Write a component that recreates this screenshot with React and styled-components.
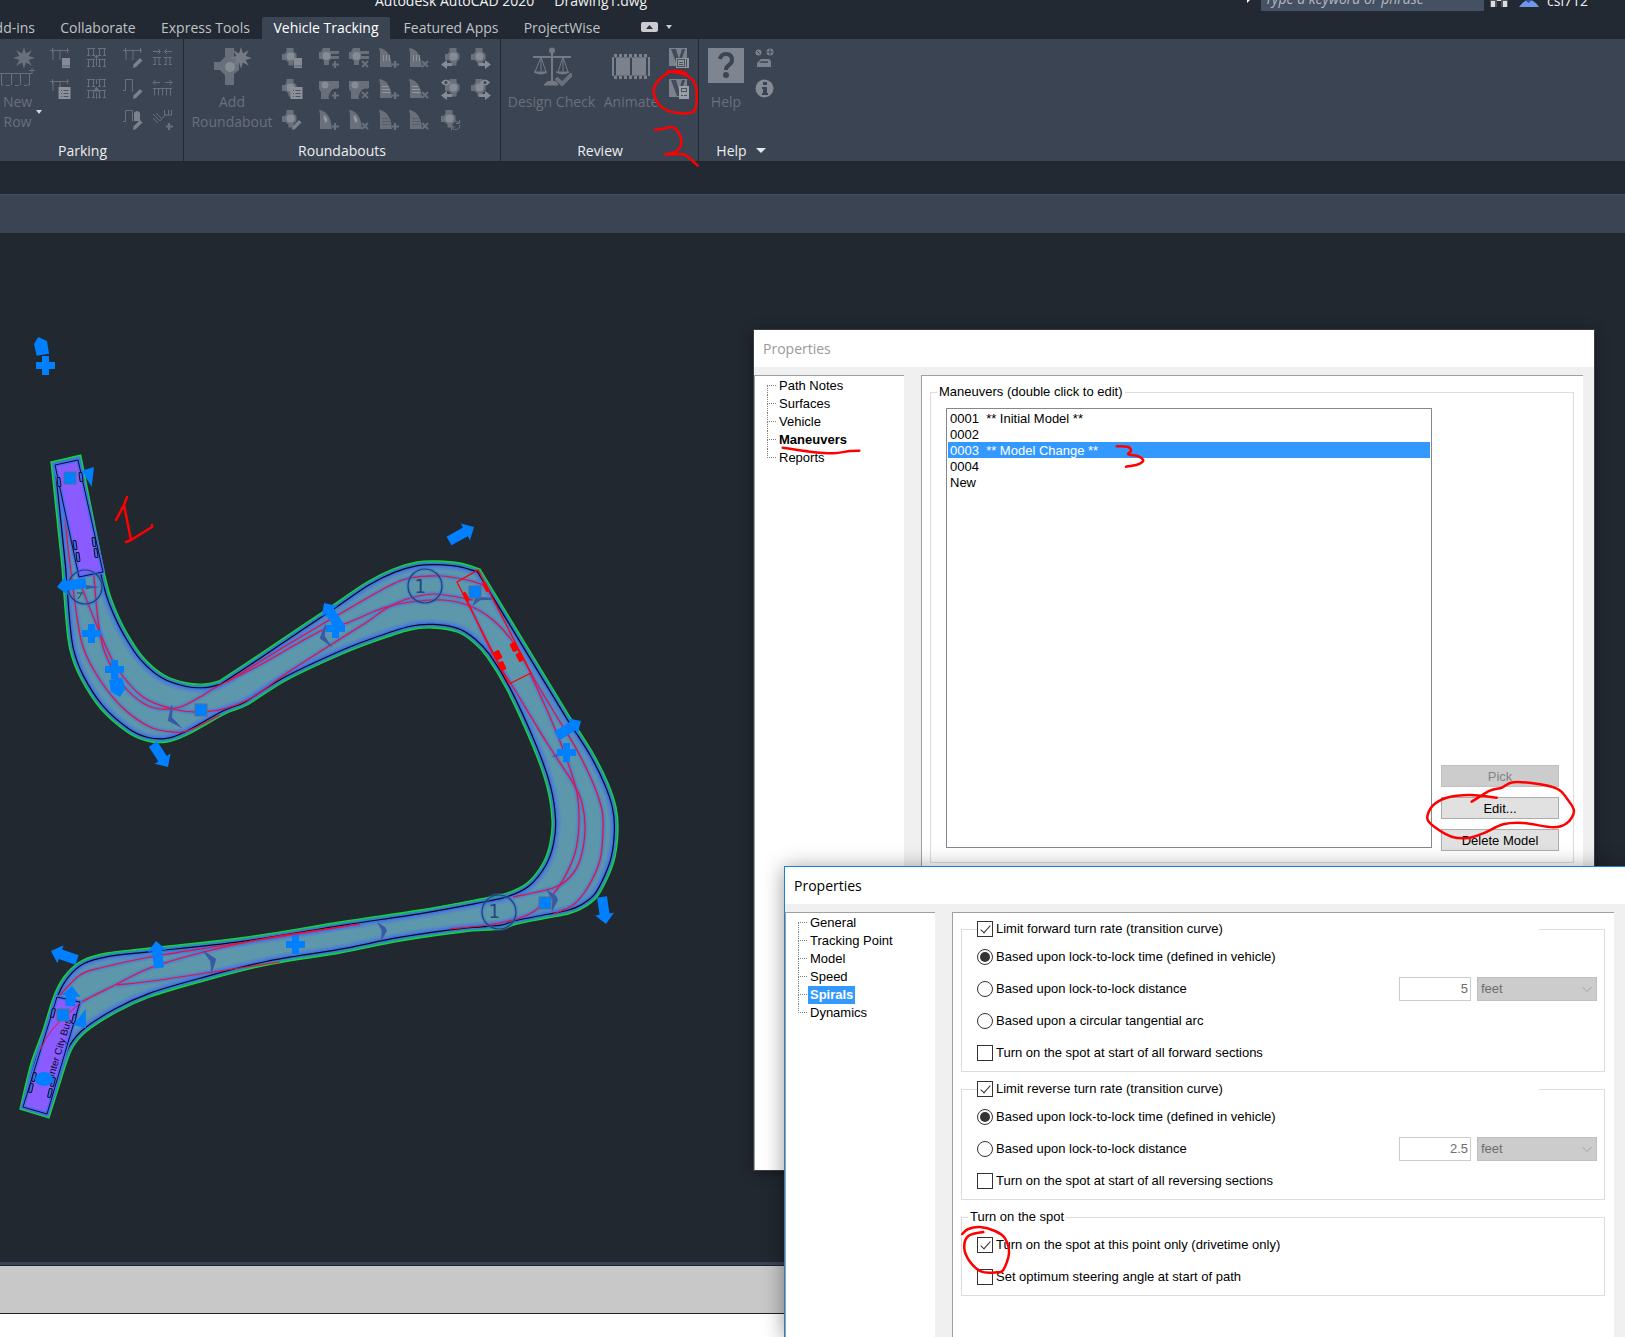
import React from "react";
import styled, { createGlobalStyle, css } from "styled-components";

const uiFont = `"Open Sans", "Noto Sans", sans-serif`;
const dialogFont = `"Liberation Sans", Arial, sans-serif`;

const color = {
  frame: "#222932",
  canvas: "#212830",
  ribbon: "#3b4453",
  face: "#f0f0f0",
  select: "#3399ff",
  grip: "#0080ff",
  ink: "#ff0000",
};

const Global = createGlobalStyle`
  *, *::before, *::after { box-sizing: border-box; }
  body { margin: 0; background: ${color.frame}; }
  button, input, select { font: inherit; margin: 0; padding: 0; }
`;

/* ---------- geometry helpers ---------- */

const smooth = (pts, lead = "M") => {
  let d = `${lead}${pts[0][0]} ${pts[0][1]}`;
  for (let i = 0; i < pts.length - 1; i++) {
    const a = pts[i - 1] || pts[i];
    const b = pts[i];
    const c = pts[i + 1];
    const e = pts[i + 2] || c;
    const f = (n) => n.toFixed(1);
    d += `C${f(b[0] + (c[0] - a[0]) / 6)} ${f(b[1] + (c[1] - a[1]) / 6)} ${f(c[0] - (e[0] - b[0]) / 6)} ${f(c[1] - (e[1] - b[1]) / 6)} ${c[0]} ${c[1]}`;
  }
  return d;
};

const third = (ox, oy, pts) =>
  pts.map(([x, y]) => [Math.round((ox + x / 3) * 10) / 10, Math.round((oy + y / 3) * 10) / 10]);

const poly = (ox, oy, pts) => third(ox, oy, pts).map((p) => p.join(",")).join(" ");

/* ---------- page frame ---------- */

const Page = styled.div`
  position: relative;
  display: flex;
  flex-direction: column;
  min-height: 100vh;
  overflow: hidden;
  background: ${color.frame};
  color: #e6e8ea;
  font: 14px/20px ${uiFont};
`;

const TitleBar = styled.header`
  display: flex;
  align-items: flex-end;
  height: 17px;
  padding: 0 32px 6px 375px;
  overflow: hidden;
`;

const TitleText = styled.span`
  flex: none;
  margin-right: 20px;
  color: #f2f2f2;
`;

const SearchArrow = styled.svg`
  flex: none;
  margin: 0 10px 8px auto;
`;

const SearchBox = styled.input`
  flex: none;
  width: 223px;
  height: 22px;
  padding: 0 4px 4px;
  border: 0;
  background: #465063;
  color: #c4c8cf;
  font-style: italic;
  &::placeholder { color: #b4b8c0; opacity: 1; }
`;

const TitleIcon = styled.svg`
  flex: none;
  margin: 0 0 4px 5px;
`;

const UserName = styled.span`
  flex: none;
  width: 46px;
  margin-left: 7px;
  color: #f2f2f2;
`;

const TabBar = styled.nav`
  display: flex;
  height: 22px;
`;

const Tab = styled.a`
  flex: none;
  display: flex;
  justify-content: ${(p) => (p.$cut ? "flex-end" : "center")};
  width: ${(p) => p.$w}px;
  padding-top: 1px;
  padding-right: ${(p) => (p.$cut ? "12px" : "0")};
  overflow: hidden;
  white-space: nowrap;
  text-decoration: none;
  border-radius: 2px 2px 0 0;
  background: ${(p) => (p.$active ? color.ribbon : "transparent")};
  color: ${(p) => (p.$active ? "#ffffff" : "#bfc2c6")};
`;

const MinimizeButton = styled.button`
  display: flex;
  align-items: center;
  gap: 8px;
  margin-left: 29px;
  border: 0;
  background: none;
  height: 20px;
`;

const Ribbon = styled.section`
  display: flex;
  background: ${color.ribbon};
`;

const Panel = styled.div`
  flex: none;
  display: flex;
  flex-direction: column;
  width: ${(p) => p.$w}px;
  padding-left: ${(p) => p.$pad || 0}px;
  border-right: ${(p) => (p.$last ? "0" : `1px solid ${color.frame}`)};
`;

const Tools = styled.div`
  display: flex;
  height: 101px;
`;

const PanelTitle = styled.div`
  display: flex;
  align-items: center;
  justify-content: center;
  gap: 9px;
  height: 21px;
  padding-right: ${(p) => p.$shift || 0}px;
  color: #eceef0;
`;

const BigButton = styled.button`
  flex: none;
  display: flex;
  flex-direction: column;
  align-items: center;
  gap: 4px;
  width: ${(p) => p.$w}px;
  padding: 8px 0 0;
  border: 0;
  background: none;
  color: #69707c;
  white-space: nowrap;
`;

const DropLabel = styled.span`
  display: flex;
  align-items: center;
  gap: 4px;
  padding-left: 9px;
`;

const Stack = styled.div`
  display: grid;
  grid-template-rows: repeat(3, 31px);
  grid-auto-flow: column;
  grid-auto-columns: 30px;
  padding-top: 3px;
  margin-left: ${(p) => p.$lead || 0}px;
`;

const ToolButton = styled.button`
  display: grid;
  place-items: center;
  border: 0;
  background: none;
  color: #69707c;
`;

const Gap = styled.div`
  height: 33px;
`;

const FileBar = styled.div`
  height: 39px;
  border-top: 1px solid #454e5c;
  background: ${color.ribbon};
`;

const Canvas = styled.main`
  flex: 1;
  background: ${color.canvas};
  & > svg { display: block; }
`;

const CommandArea = styled.footer`
  border-top: 3px solid ${color.ribbon};
`;

const CommandHistory = styled.div`
  height: 49px;
  border: solid #1c2229;
  border-width: 1px 0;
  background: #c8c8c8;
`;

const CommandLine = styled.div`
  height: 23px;
  background: #ffffff;
`;

const InkLayer = styled.svg`
  position: absolute;
  top: 0;
  left: 0;
  pointer-events: none;
`;

/* ---------- dialogs ---------- */

const Dialog = styled.section`
  position: absolute;
  display: flex;
  flex-direction: column;
  background: ${color.face};
  color: #000000;
  font: 13px/16px ${dialogFont};
  ${(p) =>
    p.$front
      ? css`
          left: 784px;
          top: 866px;
          right: 0;
          bottom: 0;
          border: solid #1a80d2;
          border-width: 1px 0 0 1px;
          box-shadow: 0 2px 20px rgba(0, 0, 0, 0.4);
        `
      : css`
          left: 753px;
          top: 329px;
          width: 842px;
          height: 842px;
          border: 1px solid #3a3f46;
          box-shadow: 0 2px 12px rgba(0, 0, 0, 0.4);
        `}
`;

const DialogTitle = styled.h2`
  margin: 0;
  padding: 9px 9px 8px;
  height: 37px;
  background: #ffffff;
  color: ${(p) => (p.$front ? "#000000" : "#999999")};
  font: 14px/20px ${uiFont};
`;

const DialogBody = styled.div`
  flex: 1;
  display: flex;
  gap: 17px;
  padding: 8px 11px 0 0;
`;

const Tree = styled.ul`
  flex: none;
  width: 150px;
  margin: 0;
  padding: 1px 0 0 12px;
  list-style: none;
  border: solid #a0a0a0;
  border-width: 1px 0 0 1px;
  background: #ffffff;
`;

const TreeItem = styled.li`
  display: flex;
  height: 18px;
  line-height: 18px;
`;

const Branch = styled.span`
  width: 9px;
  margin-right: 1px;
  &::before,
  &::after {
    content: "";
    display: block;
    height: 9px;
    border: 0 dotted #808080;
  }
  &::before { border-width: 0 0 1px ${(p) => (p.$first ? 0 : 1)}px; }
  &::after { border-left-width: ${(p) => (p.$last ? 0 : 1)}px; }
`;

const TreeLabel = styled.span`
  padding: 0 2px;
  font-weight: ${(p) => (p.$bold ? 700 : 400)};
  background: ${(p) => (p.$selected ? color.select : "transparent")};
  color: ${(p) => (p.$selected ? "#ffffff" : "#000000")};
`;

const Sheet = styled.div`
  flex: 1;
  padding: 8px 9px 0 8px;
  border: solid #a0a0a0;
  border-width: 1px 0 0 1px;
  background: #ffffff;
`;

const Group = styled.fieldset`
  min-width: 0;
  margin: 0 0 9px;
  padding: ${(p) => (p.$list ? "8px 14px 11px 15px" : "4px 7px 2px 15px")};
  border: 1px solid #dcdcdc;
`;

const Legend = styled.legend`
  height: 16px;
  padding: 0 2px;
  margin-left: -9px;
`;

const CheckLegend = styled.legend`
  width: calc(100% - 58px);
  height: 16px;
  padding: 0;
`;

const ListArea = styled.div`
  display: flex;
  gap: 9px;
`;

const List = styled.ul`
  flex: 1;
  min-height: 440px;
  margin: 0 0 3px;
  padding: 1px;
  list-style: none;
  border: 1px solid #828790;
`;

const ListItem = styled.li`
  height: 16px;
  line-height: 18px;
  padding: 0 2px;
  white-space: pre;
  background: ${(p) => (p.$selected ? color.select : "transparent")};
  color: ${(p) => (p.$selected ? "#ffffff" : "#000000")};
`;

const ButtonColumn = styled.div`
  display: flex;
  flex-direction: column;
  justify-content: flex-end;
  gap: 10px;
  width: 118px;
`;

const PushButton = styled.button`
  height: 22px;
  padding-top: 1px;
  border: 1px solid #adadad;
  background: #e1e1e1;
  color: #000000;
  &:disabled {
    border-color: #bfbfbf;
    background: #cccccc;
    color: #838383;
  }
`;

const Row = styled.div`
  display: flex;
  align-items: center;
  gap: 6px;
  height: 32px;
`;

const Choice = styled.label`
  display: flex;
  align-items: center;
  gap: 3px;
  margin-right: auto;
`;

const CheckBox = styled.input`
  appearance: none;
  display: grid;
  place-items: center;
  width: 16px;
  height: 16px;
  border: 1px solid #333333;
  background: #ffffff;
  &:checked::after {
    content: "";
    width: 5px;
    height: 10px;
    margin-bottom: 3px;
    border: solid #333333;
    border-width: 0 1px 1px 0;
    transform: rotate(42deg);
  }
`;

const Radio = styled.input`
  appearance: none;
  display: grid;
  place-items: center;
  width: 16px;
  height: 16px;
  border: 1px solid #333333;
  border-radius: 50%;
  background: #ffffff;
  &:checked::after {
    content: "";
    width: 10px;
    height: 10px;
    border-radius: 50%;
    background: #333333;
  }
`;

const NumberBox = styled.input`
  width: 72px;
  height: 24px;
  padding: 0 2px 2px;
  border: 1px solid #cccccc;
  background: #ffffff;
  color: #6d6d6d;
  text-align: right;
`;

const SelectWrap = styled.span`
  position: relative;
  width: 120px;
  & > svg {
    position: absolute;
    right: 5px;
    top: 9px;
    pointer-events: none;
  }
`;

const Select = styled.select`
  appearance: none;
  display: block;
  width: 100%;
  height: 24px;
  padding: 0 3px;
  border: 1px solid #bfbfbf;
  border-radius: 0;
  background: #cccccc;
  color: #6d6d6d;
  opacity: 1;
`;

/* ---------- ribbon glyphs ---------- */

const Plus = () => <path d="M16 13v7M13 16.500h7" strokeWidth="2.200" />;
const Cross = () => <path d="M13 13l6 6M19 13l-6 6" strokeWidth="2" />;
const Pencil = () => (
  <path d="M17 10l2.500 2.500-6.500 6.500-3 1 .5-3.500z" fill="#7c828d" stroke="none" />
);
const Book = () => (
  <g stroke="none">
    <path d="M12 10h8v10h-8z" fill="#858a94" />
    <path d="M12.500 17.500h7.500v1h-7.500z" fill="#5a616d" />
  </g>
);
const Sheets = () => (
  <g stroke="none">
    <path d="M8.500 8h12v12h-12z" fill="#8b9099" />
    <path d="M11 11h1v1h-1zM13.500 11h5v1h-5zM11 14h1v1h-1zM13.500 14h5v1h-5zM11 17h1v1h-1zM13.500 17h5v1h-5z" fill="#4b5361" />
  </g>
);
const Rack = () => <path d="M0 2.500h19M2.500 0v5M17.500 0v5M3 2.500V12M10 2.500V12" />;
const Bays = () => (
  <path d="M0 .5h8M1.500 .5v7M6.500 .5v7M0 7.500h3M5 7.500h3M11 .5h8M12.500 .5v7M17.500 .5v7M11 7.500h3M16 7.500h3M0 11.500h8M1.500 11.500v7M6.500 11.500v7M0 18.500h3M5 18.500h3M11 11.500h8M12.500 11.500v7M17.500 11.500v7M11 18.500h3M16 18.500h3" />
);
const Roundel = () => (
  <g stroke="none">
    <path d="M4.500 0h7v3.500l3 2.500v5l-3 3v3.500h-5v-3L3.500 12H0V6h2.500l2-2.500z" fill="currentColor" />
    <circle cx="8.500" cy="8.500" r="4" fill="#868c96" />
  </g>
);
const Junction = () => (
  <g stroke="none">
    <path d="M4 0h7v3h9v3h-8v2h8v3h-8l-2 2v4H5v-4l-2-2H0V4h2z" fill="currentColor" />
    <circle cx="7.500" cy="8" r="4" fill="#868c96" />
  </g>
);
const Exit = () => (
  <g stroke="none">
    <path d="M0 2h20v7l-6 2-4 9H2v-7L0 10z" fill="currentColor" />
    <circle cx="6" cy="6" r="3.500" fill="#868c96" />
    <path d="M17 10c-5 1-6 5-7 9" stroke="#3b4453" strokeWidth="1.500" fill="none" />
  </g>
);
const Fan = ({ kind }) => (
  <g>
    <path d="M0 0c8 1 12 7 13 19H1V4z" fill="currentColor" stroke="none" />
    {kind === "bars" && <path d="M4.500 7v6M7.500 7v6M10.500 7v6" stroke="#8b9099" />}
    {kind === "rows" && <path d="M3 7.500h6M3 10.500h8M3 13.500h8" stroke="#9297a0" />}
    {kind === "drop" && <path d="M5 5c4 3 4 6 2 8-2-2-3-5-2-8z" fill="#9297a0" stroke="none" />}
    {kind === "lines" && <path d="M3 8.500h6M3 11.500h8M3 14.500h8" stroke="#565d69" />}
  </g>
);
const Eye = ({ x }) => (
  <g>
    <path d={`M${x - 5} 3.500q5-6 10 0q-5 6-10 0z`} fill="#868c96" stroke="none" />
    <circle cx={x} cy="3.500" r="1.500" fill="#3b4453" stroke="none" />
  </g>
);
const ArrowLeft = () => (
  <g stroke="none">
    <path d="M0 16.500l6-4.500v3h5v3H6v3z" fill="#868c96" />
  </g>
);
const ArrowRight = () => (
  <g stroke="none">
    <path d="M20 16.500L14 12v3H8v3h6v3z" fill="#868c96" />
  </g>
);
const ShiftedRoundel = () => (
  <g transform="translate(4 0)"><Roundel /></g>
);

const glyphs = {
  rackBook: <><Rack /><Book /></>,
  rackList: <><Rack /><Sheets /></>,
  baysIn: <><Bays /><path d="M9.500 7v11M7.500 10l2-3 2 3" /></>,
  baysSplit: <><Bays /><path d="M9.500 0v5M9.500 14v6" /><path d="M7 12h5L9.500 8z" fill="currentColor" /></>,
  rackEdit: <><Rack /><Pencil /></>,
  bayEdit: <><path d="M0 11.500h2.500V.5h7V13" /><Pencil /></>,
  bayPaint: <><path d="M0 11.500h2.500V.5h7v11" /><path d="M11 3q3-4 6 0v8h-6z" fill="#7c828d" stroke="none" /><Pencil /></>,
  join: <path d="M0 3.500h7M5 1l2.500 2.500L5 6M19 3.500h-7M14 1l-2.500 2.500L14 6M0 9.500h8M2 9.500v7M6 9.500v7M0 16.500h3M5 16.500h3M11 9.500h8M13 9.500v7M17 9.500v7M11 16.500h3M16 16.500h3" />,
  spread: <path d="M7 3.500H0M2.500 1L0 3.500 2.500 6M12 3.500h7M16.500 1L19 3.500 16.500 6M0 9.500h19M1.500 9.500v7M5.500 9.500v7M9.500 9.500v7M13.500 9.500v7M17.500 9.500v7" />,
  angled: <><path d="M0 4l7 7 5-6h7M3 3l5 5M0 8l5 5M11.500 0v5M15.500 0v5M18.500 0v5" /><Plus /></>,
  rbBook: <><Roundel /><Book /></>,
  rbList: <><Roundel /><Sheets /></>,
  rbEdit: <><Roundel /><Pencil /></>,
  armAdd: <><Junction /><Plus /></>,
  exitAdd: <><Exit /><Plus /></>,
  dropAdd: <><Fan kind="drop" /><Plus /></>,
  armDel: <><Junction /><Cross /></>,
  exitDel: <><Exit /><Cross /></>,
  dropDel: <><Fan kind="drop" /><Cross /></>,
  barAdd: <><Fan kind="bars" /><Plus /></>,
  rowAdd: <><Fan kind="rows" /><Plus /></>,
  lineAdd: <><Fan kind="lines" /><Plus /></>,
  barDel: <><Fan kind="bars" /><Cross /></>,
  rowDel: <><Fan kind="rows" /><Cross /></>,
  lineDel: <><Fan kind="lines" /><Cross /></>,
  prev: <><ShiftedRoundel /><ArrowLeft /></>,
  prevEye: <><ShiftedRoundel /><Eye x={5} /><ArrowLeft /></>,
  refresh: <><Roundel /><path d="M10 15a4.500 4.500 0 0 1 8-2M19 15a4.500 4.500 0 0 1-8 3M18.500 10v3.500H15M10.500 20.500V17H14" /></>,
  next: <><Roundel /><ArrowRight /></>,
  nextEye: <><Roundel /><Eye x={14} /><ArrowRight /></>,
  vReport: (
    <g stroke="none">
      <path d="M0 0h18v18H0z" fill="#7c828d" />
      <path d="M2 1h5l3 10 3-10h3l-5 16H8z" fill="#424b5a" />
      <path d="M7 10h13v10H7z" fill="#8f949d" />
      <path d="M8 11h8v8H8zM17 11h1v8h-1z" fill="#4b5361" />
      <path d="M9 12h6v6H9z" fill="#8f949d" />
      <path d="M10 14h4v1h-4zM10 16h4v1h-4z" fill="#4b5361" />
    </g>
  ),
  vProps: (
    <g stroke="none">
      <path d="M0 0h18v18H0z" fill="#7c828d" />
      <path d="M2 1h5l3 10 3-10h3l-5 16H8z" fill="#424b5a" />
      <path d="M10 7h10v13H10z" fill="#9a9fa7" />
      <path d="M12 9h6v4h-6zM12 16h2v1h-2zM15 16h3v1h-3z" fill="#4b5361" />
      <path d="M13 10h4v2h-4z" fill="#9a9fa7" />
    </g>
  ),
  car: (
    <g stroke="none">
      <circle cx="3.500" cy="4.500" r="3" fill="#7c828d" />
      <circle cx="15" cy="4" r="3.500" fill="#7c828d" />
      <path d="M12 4h6M15 1v6M2 3l3 3" stroke="#3b4453" />
      <path d="M2 15l4-4h8l2 2v6H2z" fill="#7c828d" />
      <path d="M6 13h7v2H4z" fill="#4b5361" />
    </g>
  ),
  info: (
    <g stroke="none">
      <circle cx="9.500" cy="9.500" r="9" fill="#858a94" />
      <path d="M8 3h4v3H8zM7 8h5v6h1v2H7v-2h1v-4H7z" fill="#3b4453" />
    </g>
  ),
};

const star = (cx, cy, R, r, n) =>
  Array.from({ length: n * 2 }, (_, i) => {
    const q = i % 2 ? r : R;
    const t = (Math.PI * i) / n - Math.PI / 2;
    return `${(cx + q * Math.cos(t)).toFixed(1)},${(cy + q * Math.sin(t)).toFixed(1)}`;
  }).join(" ");

const Tool = ({ name }) => (
  <ToolButton type="button" disabled aria-label={name}>
    <svg width="20" height="20" viewBox="0 0 20 20" fill="none" stroke="currentColor" overflow="visible">
      {glyphs[name]}
    </svg>
  </ToolButton>
);

const ToolStack = ({ names, lead }) => (
  <Stack $lead={lead}>
    {names.map((n) => (
      <Tool key={n} name={n} />
    ))}
  </Stack>
);

const NewRowIcon = () => (
  <svg width="40" height="41" viewBox="0 0 40 41" fill="none" stroke="currentColor">
    <polygon points={star(26, 11, 11, 5, 8)} fill="currentColor" stroke="none" />
    <path d="M1 26.500h33M3.500 26v12h2M13.500 26v12M22.500 26v12M31.500 26v12h-2M8 38.500h4M17 38.500h4M26 38.500h3M34 21v6M31 23.500h6" />
  </svg>
);

const AddRoundaboutIcon = () => (
  <svg width="40" height="41" viewBox="0 0 40 41">
    <path d="M13 1h9v9l5 5v8l-5 4v11h-9V28l-5-5H2v-8h6l5-5z" fill="currentColor" />
    <circle cx="18" cy="20" r="5" fill="#868c96" />
    <polygon points={star(29, 11, 11, 5, 8)} fill="#757b86" />
  </svg>
);

const ScalesIcon = () => (
  <svg width="40" height="41" viewBox="0 0 40 41" fill="none" stroke="#747a85">
    <circle cx="20" cy="3.500" r="3" fill="#747a85" stroke="none" />
    <path d="M1 10h38M20 6v28" strokeWidth="2" />
    <path d="M12 38q2-4 8-4 5 0 6 4z" fill="#747a85" />
    <path d="M9 10L3 25M9 10l5 15M9 10v14M31 10l-5 15M31 10l5 15M31 10v14" />
    <path d="M2 25h13q-6 4-13 0zM24 25h13q-6 4-13 0z" fill="#747a85" />
    <path d="M24 31l6 6L40 27" strokeWidth="4" stroke="#69707c" />
  </svg>
);

const FilmIcon = () => (
  <svg width="40" height="41" viewBox="0 0 40 41">
    <path d="M1 10h2v19H1zM37 10h2v19h-2zM5 11h14v17H5zM21 11h14v17H21z" fill="#7c828d" />
    <path d="M3 8.500h35M3 30.500h35" stroke="#7c828d" strokeWidth="3" strokeDasharray="3 2" />
    <path d="M4 10.500h32M4 28.500h32" stroke="#69707c" />
  </svg>
);

const HelpIcon = () => (
  <svg width="36" height="41" viewBox="0 0 36 41">
    <path d="M0 1h36v35H0z" fill="#7f8590" />
    <path d="M12 12q1-5 6-5 6 0 6 6 0 3-3 5t-3 5" fill="none" stroke="#3b4453" strokeWidth="4" />
    <circle cx="18" cy="28" r="3" fill="#3b4453" />
  </svg>
);

/* ---------- swept path drawing ---------- */

const sweptOutline =
  "M80.700 455L104 572" +
  smooth([[104, 572], [110, 595], [117, 613], [127, 633], [143, 657], [164, 675], [187, 683], [205, 684], [219, 681]], "L") +
  smooth([[219, 681], [260, 654], [300, 627], [333, 605], [367, 582], [393, 569], [417, 562], [437, 561], [460, 563], [480, 569]], "L") +
  "L570 717" +
  smooth([[570, 717], [593, 753], [608, 783], [616, 807], [618, 830], [615, 857], [608, 877], [597, 897], [583, 908], [568, 914], [547, 918], [517, 924], [500, 929], [463, 932], [400, 941], [340, 953], [267, 965], [200, 982], [150, 997], [117, 1012], [87, 1031], [73, 1047], [65, 1067]], "L") +
  "L49 1118L20 1109" +
  smooth([[20, 1109], [26, 1083], [32, 1060], [43, 1030], [55, 993], [67, 973], [83, 960], [107, 953], [150, 948], [240, 938], [340, 922], [420, 910], [480, 899], [507, 893], [527, 883], [543, 863], [550, 843], [552, 820], [547, 787], [533, 747], [507, 690], [487, 657], [473, 642], [457, 632], [433, 628], [410, 630], [373, 642], [340, 655], [287, 680], [247, 705], [225, 714], [187, 735], [167, 742], [147, 741], [127, 732], [100, 708], [80, 677], [70, 650], [66, 620], [62, 567]], "L") +
  "L51 462Z";

const wheelTracks = [
  [[62, 487], [68, 547], [75, 603], [83, 647], [100, 680], [123, 708], [150, 727], [173, 732], [190, 730], [220, 715]],
  [[80, 583], [100, 633], [117, 668], [143, 697], [173, 709], [200, 712], [227, 708], [253, 697], [287, 673], [340, 639], [367, 622], [387, 608], [407, 599], [433, 594], [457, 597], [473, 600]],
  [[85, 500], [93, 567], [98, 620], [105, 653], [123, 685], [143, 703], [160, 709], [180, 707], [200, 697], [220, 685], [260, 665], [300, 642], [327, 628], [347, 623], [383, 608], [410, 602], [443, 600], [470, 606], [493, 620], [513, 642], [533, 677], [557, 717], [577, 750], [593, 783], [602, 810], [603, 830], [600, 860], [588, 887], [573, 905], [553, 914]],
  [[227, 682], [287, 645], [343, 612], [387, 587], [410, 578], [440, 576], [467, 580], [487, 586]],
  [[467, 600], [493, 655], [513, 687], [547, 743], [573, 783], [582, 803], [585, 830], [580, 860], [570, 877], [553, 888], [513, 897]],
  [[530, 673], [550, 717], [567, 760], [577, 793], [579, 823], [575, 853], [563, 880], [550, 898], [533, 912], [517, 919], [487, 925], [450, 929]],
  [[360, 924], [267, 938], [200, 953], [150, 968], [113, 986], [80, 1003], [67, 1015], [50, 1032], [40, 1050]],
  [[360, 924], [233, 944], [150, 957], [100, 968], [80, 975], [60, 995]],
  [[117, 985], [160, 980], [213, 972], [280, 962]],
].map((p) => smooth(p));

const arrowGrips = [
  [57, 587, 86, 583], [168, 767, 153, 744], [474, 527, 449, 541], [324, 603, 340, 627],
  [581, 721, 557, 736], [606, 924, 602, 897], [51, 951, 77, 960], [156, 941, 159, 968], [72, 986, 70, 1006],
];

const ArrowGrip = ({ at: [tx, ty, bx, by] }) => {
  const len = Math.hypot(tx - bx, ty - by);
  const turn = (Math.atan2(ty - by, tx - bx) * 180) / Math.PI;
  return (
    <path
      transform={`translate(${bx} ${by}) rotate(${turn.toFixed(1)})`}
      d={`M0-5H${(len - 10).toFixed(1)}V-9.500L${len.toFixed(1)} 0L${(len - 10).toFixed(1)} 9.500V5H0Z`}
    />
  );
};

const wheel = (x, y, turn, w = 3, h = 9) => (
  <rect key={`${x}-${y}`} x={x - w / 2} y={y - h / 2} width={w} height={h} rx="1" transform={`rotate(${turn} ${x} ${y})`} />
);

const SweptPath = () => (
  <svg width="700" height="1029" viewBox="0 233 700 1029" fill="none" role="img" aria-label="Swept path drawing">
    <defs>
      <clipPath id="sweep">
        <path d={sweptOutline} />
      </clipPath>
    </defs>
    <path d={sweptOutline} fill="#5d97ac" />
    <g clipPath="url(#sweep)">
      <g stroke="#3f6cf0" strokeLinejoin="round">
        <path d={sweptOutline} strokeWidth="18" opacity=".2" />
        <path d={sweptOutline} strokeWidth="14" opacity=".35" />
        <path d={sweptOutline} strokeWidth="11" opacity=".8" />
        {wheelTracks.map((d) => (
          <g key={d}>
            <path d={d} strokeWidth="6" opacity=".2" />
            <path d={d} strokeWidth="3" opacity=".4" />
          </g>
        ))}
      </g>
      <path d={sweptOutline} stroke="#050a14" strokeWidth="8.400" />
      <path d={sweptOutline} stroke="#3878dc" strokeWidth="6" />
      <path d={sweptOutline} stroke="#2b93a8" strokeWidth="4" />
    </g>
    <path d={sweptOutline} stroke="#14d43a" strokeWidth="1.300" />
    <g stroke="#f00f30" strokeWidth="1.200" clipPath="url(#sweep)">
      {wheelTracks.map((d) => (
        <path key={d} d={d} />
      ))}
    </g>

    <g strokeLinejoin="miter">
      <path d="M55 465L78 460L103 572L79 577Z" fill="#8a5cff" stroke="#4a6cf5" strokeWidth="4" />
      <path d="M55 465L78 460L103 572L79 577Z" stroke="#0a0f22" />
      <path d="M57 997L80 1002L47 1114L23 1107Z" fill="#8a5cff" stroke="#4a6cf5" strokeWidth="4" />
      <path d="M57 997L80 1002L47 1114L23 1107Z" stroke="#0a0f22" />
      <path d="M80 1003L67 1015Q50 1028 40 1050" stroke="#f00f30" />
    </g>
    <g stroke="#0a0f22" fill="#3f6ce8">
      {[[59, 482], [81, 477], [75, 545], [78, 557], [94, 542], [96, 553]].map(([x, y]) => wheel(x, y, -8))}
      {[[53, 1013], [74, 1019], [34, 1077], [31, 1088], [53, 1082], [50, 1093]].map(([x, y]) => wheel(x, y, 14))}
    </g>
    <path d="M457 582L478 570L531 673L509 684Z" stroke="#ff0000" strokeWidth="1.300" />
    <g fill="#ff0000">
      {[[486, 587, 4, 10], [466, 597, 4, 10], [514, 647, 6, 9], [520, 657, 6, 9], [498, 655, 6, 9], [502, 666, 6, 9]].map(([x, y, w, h]) => wheel(x, y, -27, w, h))}
    </g>
    <text transform="translate(44 1086) rotate(-73)" x="5" y="7" fill="#060a24" fontFamily="Liberation Sans Narrow, Liberation Sans, sans-serif" fontSize="10">
      - Inter City Bus
    </text>

    <g fill="#3759a6">
      <polygon points={poly(0, 320, [[514, 1155], [518, 1160], [516, 1192], [547, 1225], [503, 1202]])} />
      <polygon points={poly(0, 320, [[976, 912], [978, 918], [974, 948], [998, 984], [959, 955]])} />
      <polygon points={poly(300, 500, [[517, 318], [527, 290], [575, 293], [575, 299], [541, 301]])} />
      <polygon points={poly(300, 500, [[231, 1266], [256, 1282], [261, 1292], [243, 1324], [245, 1291]])} />
      <polygon points={poly(300, 500, [[739, 1168], [769, 1188], [774, 1200], [755, 1237], [757, 1200]])} />
      <polygon points={poly(0, 900, [[606, 149], [648, 176], [647, 184], [634, 222], [631, 184]])} />
      <polygon points={poly(300, 500, [[753, 772], [775, 760], [827, 764], [827, 768], [780, 768]])} />
      <polygon points={poly(0, 320, [[255, 795], [300, 801], [258, 808]])} />
    </g>
    <g>
      {[[85, 587], [425, 586], [499, 912]].map(([x, y]) => (
        <g key={x}>
          <circle cx={x} cy={y} r="17" stroke="#3f6cf0" strokeWidth="4" opacity=".4" />
          <circle cx={x} cy={y} r="17" stroke="#1d4560" strokeWidth="1.200" />
        </g>
      ))}
    </g>
    <g fill="#1f4a7c" fontFamily="DejaVu Sans Mono, monospace" fontSize="19" textAnchor="middle">
      <text x="420" y="593">1</text>
      <text x="494" y="918">1</text>
    </g>
    <path d="M77 593h6M78 599l4-6" stroke="#1d4560" />

    <g fill={color.grip}>
      {arrowGrips.map((a) => (
        <ArrowGrip key={a.join()} at={a} />
      ))}
      {[[45, 365], [91, 633], [114, 669], [335, 628], [566, 752], [295, 944]].map(([x, y]) => (
        <path key={x} d={`M${x - 3} ${y - 9}h7v6h6v7h-6v6h-7v-6h-6v-7h6z`} />
      ))}
      <polygon points={poly(0, 320, [[115, 51], [141, 63], [147, 101], [110, 107], [102, 72]])} />
      <polygon points={poly(0, 320, [[327, 1080], [367, 1073], [375, 1108], [360, 1131], [333, 1115]])} />
      <polygon points={poly(0, 320, [[245, 452], [282, 441], [275, 500]])} />
      <polygon points={poly(0, 900, [[257, 327], [258, 384], [220, 375]])} />
      <ellipse cx="44" cy="1079" rx="9" ry="7" />
      {[[70, 478], [201, 710], [475, 592], [545, 903], [63, 1015]].map(([x, y]) => (
        <rect key={x} x={x - 6} y={y - 6} width="12" height="12" stroke="#51708a" />
      ))}
    </g>
  </svg>
);

/* ---------- red pen marks ---------- */

const penMarks = [
  third(400, 0, [[858, 218], [820, 213], [785, 232], [763, 262], [766, 295], [790, 325], [835, 339], [882, 333], [890, 290], [884, 250], [855, 224], [803, 214]]),
  third(400, 0, [[765, 389], [790, 386], [818, 382], [838, 402], [843, 435], [825, 456], [797, 463]]),
  third(400, 0, [[797, 463], [850, 463], [872, 478], [893, 497]]),
  third(750, 325, [[98, 368], [180, 380], [250, 385], [300, 378], [328, 377]]),
  third(750, 325, [[1100, 364], [1135, 366], [1143, 378], [1135, 388], [1165, 394], [1179, 404], [1176, 412], [1158, 420], [1128, 425]]),
  third(1380, 740, [[350, 173], [270, 165], [200, 173], [158, 197], [142, 235], [165, 262], [215, 290], [265, 294], [310, 280], [370, 253], [430, 249], [520, 262], [560, 250], [582, 213], [560, 175], [535, 148], [480, 133], [400, 127], [365, 143], [330, 152], [275, 185]]),
  third(750, 850, [[637, 1152], [655, 1137], [690, 1131], [735, 1143], [765, 1165], [777, 1210], [760, 1260], [740, 1267], [695, 1265], [660, 1235], [643, 1195], [655, 1158], [700, 1146]]),
].map((p) => smooth(p));

const PenMarks = () => (
  <InkLayer width="1625" height="1337" viewBox="0 0 1625 1337" fill="none" stroke={color.ink} strokeWidth="2.500" strokeLinecap="round" strokeLinejoin="round" aria-hidden="true">
    {penMarks.map((d) => (
      <path key={d} d={d} />
    ))}
    <path d="M116 520L124 505L127 497M124 505L131 540M126 542L131 540L152 527V525" />
  </InkLayer>
);

/* ---------- dialog parts ---------- */

const PropertyTree = ({ items, bold, selected }) => (
  <Tree>
    {items.map((t, i) => (
      <TreeItem key={t}>
        <Branch $first={i === 0} $last={i === items.length - 1} />
        <TreeLabel $bold={t === bold} $selected={t === selected}>{t}</TreeLabel>
      </TreeItem>
    ))}
  </Tree>
);

const Check = ({ label, on }) => (
  <Choice>
    <CheckBox type="checkbox" defaultChecked={on} />
    {label}
  </Choice>
);

const Option = ({ label, group, on }) => (
  <Choice>
    <Radio type="radio" name={group} defaultChecked={on} />
    {label}
  </Choice>
);

const Distance = ({ value, name }) => (
  <>
    <NumberBox defaultValue={value} disabled aria-label={`${name} distance`} />
    <SelectWrap>
      <Select disabled aria-label={`${name} unit`}>
        <option>feet</option>
      </Select>
      <svg width="10" height="7" viewBox="0 0 10 7" fill="none" stroke="#a0a0a0">
        <path d="M.5 1L5 5.500L9.500 1" />
      </svg>
    </SelectWrap>
  </>
);

const maneuvers = ["0001  ** Initial Model **", "0002", "0003  ** Model Change **", "0004", "New"];

export default function App() {
  return (
    <>
      <Global />
      <Page>
        <TitleBar>
          <TitleText>Autodesk AutoCAD 2020</TitleText>
          <TitleText>Drawing1.dwg</TitleText>
          <SearchArrow width="4" height="8" viewBox="0 0 4 8"><path d="M0 0l4 4-4 4z" fill="#ffffff" /></SearchArrow>
          <SearchBox placeholder="Type a keyword or phrase" aria-label="Search" />
          <TitleIcon width="20" height="16" viewBox="0 0 20 16">
            <path d="M3 0h5v16H1V9zM12 0h5l2 9v7h-7z" fill="#55585c" />
            <path d="M2 10h4v6H2zM14 10h4v6h-4zM8 4h4v6H8z" fill="#dddddd" />
          </TitleIcon>
          <TitleIcon width="26" height="16" viewBox="0 0 26 16">
            <path d="M5 16q3-5 8-7h4q5 2 8 7z" fill="#6f97ea" />
            <path d="M11 9h7l-3.500 3z" fill="#34509a" />
          </TitleIcon>
          <UserName>csi712</UserName>
        </TitleBar>
        <TabBar>
          <Tab href="#" $w={47} $cut>Add-ins</Tab>
          <Tab href="#" $w={102}>Collaborate</Tab>
          <Tab href="#" $w={113}>Express Tools</Tab>
          <Tab href="#" $w={128} $active>Vehicle Tracking</Tab>
          <Tab href="#" $w={122}>Featured Apps</Tab>
          <Tab href="#" $w={100}>ProjectWise</Tab>
          <MinimizeButton type="button" aria-label="Minimize ribbon">
            <svg width="17" height="10" viewBox="0 0 17 10">
              <rect width="17" height="10" rx="2" fill="#c9cbce" />
              <path d="M5 7l3.500-4L12 7z" fill="#2a313b" />
            </svg>
            <svg width="6" height="4" viewBox="0 0 6 4"><path d="M0 0h6L3 4z" fill="#c9cbce" /></svg>
          </MinimizeButton>
        </TabBar>

        <Ribbon>
          <Panel $w={184}>
            <Tools>
              <BigButton type="button" disabled $w={36}>
                <NewRowIcon />
                <DropLabel>
                  <span>New<br />Row</span>
                  <svg width="6" height="4" viewBox="0 0 6 4"><path d="M0 0h6L3 4z" fill="#d5d7da" /></svg>
                </DropLabel>
              </BigButton>
              <ToolStack lead={9} names={["rackBook", "rackList"]} />
              <ToolStack lead={7} names={["baysIn", "baysSplit"]} />
              <ToolStack lead={6} names={["rackEdit", "bayEdit", "bayPaint", "join", "spread", "angled"]} />
            </Tools>
            <PanelTitle $shift={18}>Parking</PanelTitle>
          </Panel>
          <Panel $w={317} $pad={3}>
            <Tools>
              <BigButton type="button" disabled $w={90}>
                <AddRoundaboutIcon />
                <span>Add<br />Roundabout</span>
              </BigButton>
              <ToolStack names={["rbBook", "rbList", "rbEdit"]} />
              <ToolStack
                lead={7}
                names={["armAdd", "exitAdd", "dropAdd", "armDel", "exitDel", "dropDel", "barAdd", "rowAdd", "lineAdd", "barDel", "rowDel", "lineDel"]}
              />
              <ToolStack lead={2} names={["prev", "prevEye", "refresh", "next", "nextEye"]} />
            </Tools>
            <PanelTitle $shift={3}>Roundabouts</PanelTitle>
          </Panel>
          <Panel $w={198} $pad={1}>
            <Tools>
              <BigButton type="button" disabled $w={99}>
                <ScalesIcon />
                <span>Design Check</span>
              </BigButton>
              <BigButton type="button" disabled $w={60}>
                <FilmIcon />
                <span>Animate</span>
              </BigButton>
              <ToolStack lead={3} names={["vReport", "vProps"]} />
            </Tools>
            <PanelTitle>Review</PanelTitle>
          </Panel>
          <Panel $w={84} $last>
            <Tools>
              <BigButton type="button" disabled $w={54}>
                <HelpIcon />
                <span>Help</span>
              </BigButton>
              <ToolStack lead={-3} names={["car", "info"]} />
            </Tools>
            <PanelTitle>
              Help
              <svg width="10" height="5" viewBox="0 0 10 5"><path d="M0 0h10L5 5z" fill="#e6e8ea" /></svg>
            </PanelTitle>
          </Panel>
        </Ribbon>
        <Gap />
        <FileBar />
        <Canvas>
          <SweptPath />
        </Canvas>
        <CommandArea>
          <CommandHistory />
          <CommandLine />
        </CommandArea>

        <Dialog>
          <DialogTitle>Properties</DialogTitle>
          <DialogBody>
            <PropertyTree items={["Path Notes", "Surfaces", "Vehicle", "Maneuvers", "Reports"]} bold="Maneuvers" />
            <Sheet>
              <Group $list>
                <Legend>Maneuvers (double click to edit)</Legend>
                <ListArea>
                  <List>
                    {maneuvers.map((m, i) => (
                      <ListItem key={m} $selected={i === 2}>{m}</ListItem>
                    ))}
                  </List>
                  <ButtonColumn>
                    <PushButton type="button" disabled>Pick</PushButton>
                    <PushButton type="button">Edit...</PushButton>
                    <PushButton type="button">Delete Model</PushButton>
                  </ButtonColumn>
                </ListArea>
              </Group>
            </Sheet>
          </DialogBody>
        </Dialog>

        <Dialog $front>
          <DialogTitle $front>Properties</DialogTitle>
          <DialogBody>
            <PropertyTree items={["General", "Tracking Point", "Model", "Speed", "Spirals", "Dynamics"]} bold="Spirals" selected="Spirals" />
            <Sheet>
              <Group>
                <CheckLegend><Check on label="Limit forward turn rate (transition curve)" /></CheckLegend>
                <Row><Option on group="forward" label="Based upon lock-to-lock time (defined in vehicle)" /></Row>
                <Row>
                  <Option group="forward" label="Based upon lock-to-lock distance" />
                  <Distance value="5" name="Forward" />
                </Row>
                <Row><Option group="forward" label="Based upon a circular tangential arc" /></Row>
                <Row><Check label="Turn on the spot at start of all forward sections" /></Row>
              </Group>
              <Group>
                <CheckLegend><Check on label="Limit reverse turn rate (transition curve)" /></CheckLegend>
                <Row><Option on group="reverse" label="Based upon lock-to-lock time (defined in vehicle)" /></Row>
                <Row>
                  <Option group="reverse" label="Based upon lock-to-lock distance" />
                  <Distance value="2.5" name="Reverse" />
                </Row>
                <Row><Check label="Turn on the spot at start of all reversing sections" /></Row>
              </Group>
              <Group>
                <Legend>Turn on the spot</Legend>
                <Row><Check on label="Turn on the spot at this point only (drivetime only)" /></Row>
                <Row><Check label="Set optimum steering angle at start of path" /></Row>
              </Group>
            </Sheet>
          </DialogBody>
        </Dialog>
        <PenMarks />
      </Page>
    </>
  );
}
